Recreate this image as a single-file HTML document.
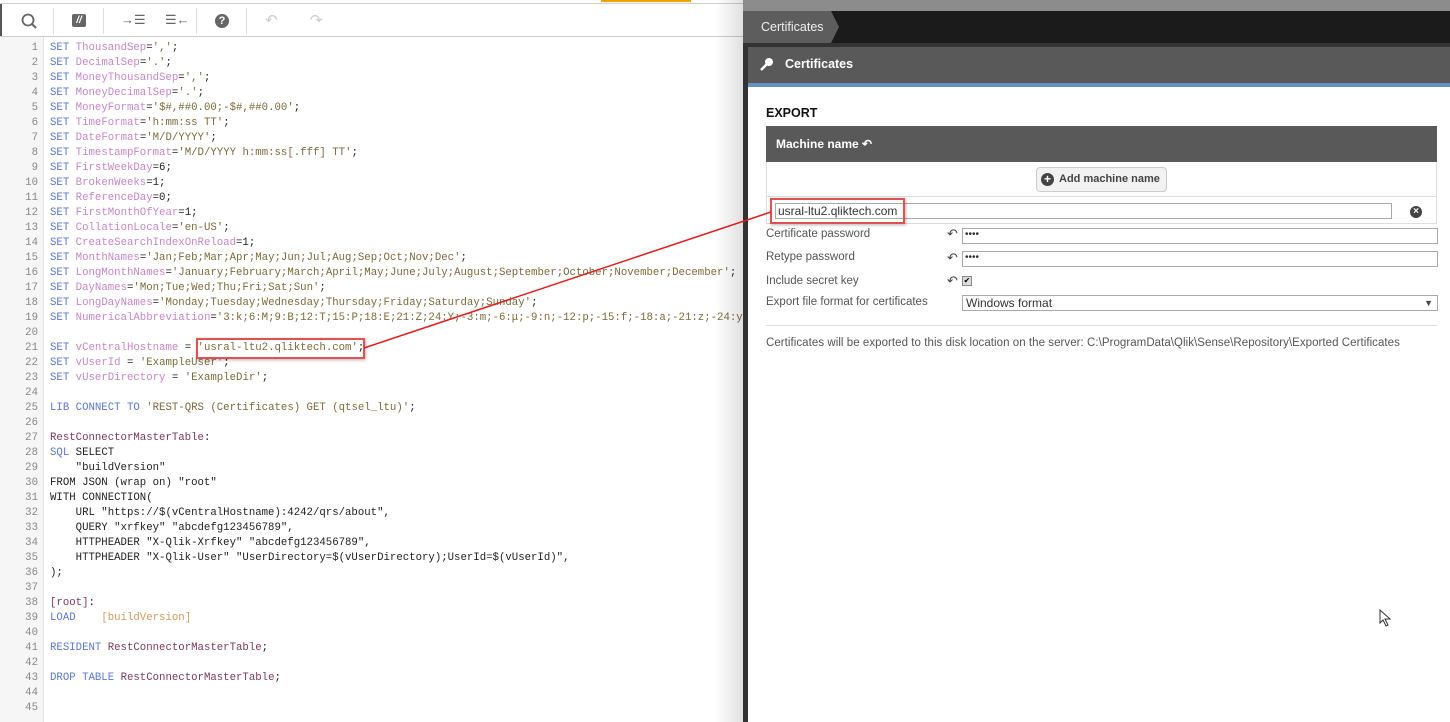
<!DOCTYPE html>
<html><head><meta charset="utf-8"><style>
*{margin:0;padding:0;box-sizing:border-box}
body{width:1450px;height:722px;overflow:hidden;background:#fff;position:relative;font-family:"Liberation Sans",sans-serif}
.abs{position:absolute}
#ed{left:0;top:0;width:743px;height:722px;background:#fff}
#gut{left:0;top:37px;width:44px;height:685px;background:#f6f6f6;border-right:1px solid #e2e2e2}
.code{font-family:"Liberation Mono",monospace;font-size:10.7px;line-height:15px;white-space:pre;color:#222}
#nums{left:0;top:41px;width:38px;text-align:right;color:#888}
#src{left:50px;top:41px}
.k{color:#5a78d6}.v{color:#c985c9}.s{color:#7c6a3a}.t{color:#7b3a5c}.f{color:#d49a5a}
.tb{top:8px;height:26px;width:1px;background:#ddd}
.lbl{font-size:11.5px;color:#555}
.inp{border:1px solid #aaa;background:#fff}
</style></head><body>
<div id="ed" class="abs">
 <div class="abs" style="left:0;top:3px;width:743px;height:1px;background:#d0d0d0"></div>
 <div class="abs" style="left:601px;top:0;width:90px;height:2px;background:#f0a000"></div>
 <div class="abs" style="left:0;top:36px;width:743px;height:1px;background:#ccc"></div>
 <div class="abs" style="left:0;top:4px;width:2px;height:32px;background:#555"></div>
 <svg class="abs" style="left:20px;top:12px" width="18" height="18"><circle cx="8" cy="8" r="5.5" fill="none" stroke="#666" stroke-width="1.8"/><line x1="12" y1="12" x2="16" y2="16" stroke="#666" stroke-width="2"/></svg>
 <div class="abs tb" style="left:53px"></div>
 <div class="abs" style="left:72px;top:14px;width:14px;height:13px;background:#666;border-radius:2px;color:#fff;font-size:10px;font-weight:bold;font-style:italic;text-align:center;line-height:13px">//</div>
 <div class="abs tb" style="left:103px"></div>
 <div class="abs" style="left:121px;top:12px;font-size:13px;color:#666">→☰</div>
 <div class="abs" style="left:165px;top:12px;font-size:13px;color:#666">☰←</div>
 <div class="abs tb" style="left:196px"></div>
 <div class="abs" style="left:215px;top:14px;width:14px;height:14px;border-radius:50%;background:#666;color:#fff;font-size:11px;font-weight:bold;text-align:center;line-height:14px">?</div>
 <div class="abs tb" style="left:246px"></div>
 <div class="abs" style="left:265px;top:11px;font-size:15px;color:#ccc">↶</div>
 <div class="abs" style="left:310px;top:11px;font-size:15px;color:#ccc">↷</div>
 <div id="gut" class="abs"></div>
 <div id="nums" class="abs code">1
2
3
4
5
6
7
8
9
10
11
12
13
14
15
16
17
18
19
20
21
22
23
24
25
26
27
28
29
30
31
32
33
34
35
36
37
38
39
40
41
42
43
44
45</div>
 <div id="src" class="abs code"><span class="k">SET</span> <span class="v">ThousandSep</span>=<span class="s">','</span>;
<span class="k">SET</span> <span class="v">DecimalSep</span>=<span class="s">'.'</span>;
<span class="k">SET</span> <span class="v">MoneyThousandSep</span>=<span class="s">','</span>;
<span class="k">SET</span> <span class="v">MoneyDecimalSep</span>=<span class="s">'.'</span>;
<span class="k">SET</span> <span class="v">MoneyFormat</span>=<span class="s">'$#,##0.00;-$#,##0.00'</span>;
<span class="k">SET</span> <span class="v">TimeFormat</span>=<span class="s">'h:mm:ss TT'</span>;
<span class="k">SET</span> <span class="v">DateFormat</span>=<span class="s">'M/D/YYYY'</span>;
<span class="k">SET</span> <span class="v">TimestampFormat</span>=<span class="s">'M/D/YYYY h:mm:ss[.fff] TT'</span>;
<span class="k">SET</span> <span class="v">FirstWeekDay</span>=6;
<span class="k">SET</span> <span class="v">BrokenWeeks</span>=1;
<span class="k">SET</span> <span class="v">ReferenceDay</span>=0;
<span class="k">SET</span> <span class="v">FirstMonthOfYear</span>=1;
<span class="k">SET</span> <span class="v">CollationLocale</span>=<span class="s">'en-US'</span>;
<span class="k">SET</span> <span class="v">CreateSearchIndexOnReload</span>=1;
<span class="k">SET</span> <span class="v">MonthNames</span>=<span class="s">'Jan;Feb;Mar;Apr;May;Jun;Jul;Aug;Sep;Oct;Nov;Dec'</span>;
<span class="k">SET</span> <span class="v">LongMonthNames</span>=<span class="s">'January;February;March;April;May;June;July;August;September;October;November;December'</span>;
<span class="k">SET</span> <span class="v">DayNames</span>=<span class="s">'Mon;Tue;Wed;Thu;Fri;Sat;Sun'</span>;
<span class="k">SET</span> <span class="v">LongDayNames</span>=<span class="s">'Monday;Tuesday;Wednesday;Thursday;Friday;Saturday;Sunday'</span>;
<span class="k">SET</span> <span class="v">NumericalAbbreviation</span>=<span class="s">'3:k;6:M;9:B;12:T;15:P;18:E;21:Z;24:Y;-3:m;-6:μ;-9:n;-12:p;-15:f;-18:a;-21:z;-24:y'</span>;

<span class="k">SET</span> <span class="v">vCentralHostname</span> = <span class="s">'usral-ltu2.qliktech.com'</span>;
<span class="k">SET</span> <span class="v">vUserId</span> = <span class="s">'ExampleUser'</span>;
<span class="k">SET</span> <span class="v">vUserDirectory</span> = <span class="s">'ExampleDir'</span>;

<span class="k">LIB CONNECT TO</span> <span class="s">'REST-QRS (Certificates) GET (qtsel_ltu)'</span>;

<span class="t">RestConnectorMasterTable</span>:
<span class="k">SQL</span> SELECT
    "buildVersion"
FROM JSON (wrap on) "root"
WITH CONNECTION(
    URL "https://$(vCentralHostname):4242/qrs/about",
    QUERY "xrfkey" "abcdefg123456789",
    HTTPHEADER "X-Qlik-Xrfkey" "abcdefg123456789",
    HTTPHEADER "X-Qlik-User" "UserDirectory=$(vUserDirectory);UserId=$(vUserId)",
);

<span class="t">[root]</span>:
<span class="k">LOAD</span>    <span class="f">[buildVersion]</span>

<span class="k">RESIDENT</span> <span class="t">RestConnectorMasterTable</span>;

<span class="k">DROP TABLE</span> <span class="t">RestConnectorMasterTable</span>;</div>
 <div class="abs" style="left:196px;top:338px;width:169px;height:21px;border:2px solid #e35050;box-shadow:1px 1px 3px rgba(0,0,0,.3)"></div>
 <div class="abs" style="left:715px;top:0;width:28px;height:722px;background:linear-gradient(to right,rgba(0,0,0,0),rgba(0,0,0,.12))"></div>
</div>
<div class="abs" style="left:743px;top:0;width:707px;height:722px;background:#333"></div>
<div class="abs" style="left:743px;top:0;width:707px;height:11px;background:#8c8c8c"></div>
<div class="abs" style="left:743px;top:11px;width:707px;height:32px;background:#1b1b1b"></div>
<svg class="abs" style="left:743px;top:11px" width="100" height="32"><polygon points="0,0 88,0 96,16 88,32 0,32" fill="#5d5d5d"/></svg>
<div class="abs" style="left:761px;top:20px;font-size:12.5px;color:#eee">Certificates</div>
<div class="abs" style="left:748px;top:47px;width:702px;height:36px;background:#595959"></div>
<div class="abs" style="left:748px;top:83px;width:702px;height:4px;background:#6592c4"></div>
<div class="abs" style="left:748px;top:87px;width:702px;height:635px;background:#fff"></div>
<svg class="abs" style="left:760px;top:57px" width="14" height="14"><circle cx="9" cy="5" r="4" fill="#fff"/><line x1="7" y1="7" x2="1" y2="13" stroke="#fff" stroke-width="2.5"/></svg>
<div class="abs" style="left:785px;top:57px;font-size:12.5px;font-weight:bold;color:#fff">Certificates</div>
<div class="abs" style="left:766px;top:106px;font-size:12.5px;font-weight:bold;color:#111">EXPORT</div>
<div class="abs" style="left:766px;top:126px;width:671px;height:36px;background:#595959"></div>
<div class="abs" style="left:776px;top:137px;font-size:12px;font-weight:bold;color:#fff">Machine name ↶</div>
<div class="abs" style="left:766px;top:162px;width:671px;height:62px;border:1px solid #ddd;border-top:none"></div>
<div class="abs" style="left:766px;top:196px;width:671px;height:1px;background:#ddd"></div>
<div class="abs" style="left:1036px;top:167px;width:131px;height:25px;border:1px solid #ccc;border-radius:4px;background:#f2f2f2"></div>
<div class="abs" style="left:1041px;top:173px;width:13px;height:13px;border-radius:50%;background:#444;color:#fff;font-size:12px;font-weight:bold;line-height:13px;text-align:center">+</div>
<div class="abs" style="left:1059px;top:173px;font-size:11px;font-weight:bold;color:#444">Add machine name</div>
<div class="abs inp" style="left:775px;top:203px;width:617px;height:16px"></div>
<div class="abs" style="left:778px;top:204px;font-size:12px;color:#333">usral-ltu2.qliktech.com</div>
<div class="abs" style="left:770px;top:198px;width:135px;height:26px;border:2px solid #e35050;box-shadow:1px 1px 3px rgba(0,0,0,.3)"></div>
<div class="abs" style="left:1410px;top:206px;width:12px;height:12px;border-radius:50%;background:#444;color:#fff;font-size:10px;line-height:12px;text-align:center;font-weight:bold">×</div>
<div class="abs lbl" style="left:766px;top:228px">Certificate password</div>
<div class="abs lbl" style="left:766px;top:251px">Retype password</div>
<div class="abs lbl" style="left:766px;top:275px">Include secret key</div>
<div class="abs lbl" style="left:766px;top:296px">Export file format for certificates</div>
<div class="abs" style="left:947px;top:226px;font-size:13px;color:#444">↶</div>
<div class="abs" style="left:947px;top:250px;font-size:13px;color:#444">↶</div>
<div class="abs" style="left:947px;top:273px;font-size:13px;color:#444">↶</div>
<div class="abs inp" style="left:962px;top:228px;width:476px;height:16px;font-size:10px;line-height:12px;padding-left:2px;color:#333">••••</div>
<div class="abs inp" style="left:962px;top:251px;width:476px;height:16px;font-size:10px;line-height:12px;padding-left:2px;color:#333">••••</div>
<div class="abs" style="left:962px;top:276px;width:10px;height:10px;border:1px solid #888;background:#ddd;font-size:8px;line-height:8px;text-align:center">✔</div>
<div class="abs inp" style="left:962px;top:295px;width:476px;height:16px;font-size:12px;line-height:14px;padding-left:3px;color:#333">Windows format<span style="position:absolute;right:4px;top:0;font-size:9px;color:#444">▼</span></div>
<div class="abs" style="left:766px;top:325px;width:671px;height:1px;background:#ddd"></div>
<div class="abs lbl" style="left:766px;top:337px;font-size:11.5px;letter-spacing:0.05px">Certificates will be exported to this disk location on the server: C:\ProgramData\Qlik\Sense\Repository\Exported Certificates</div>
<svg class="abs" style="left:1379px;top:609px" width="14" height="20"><path d="M1,1 L1,14 L4,11 L7,17 L9,16 L6,10 L11,10 Z" fill="#fff" stroke="#333" stroke-width="1"/></svg>
<svg class="abs" style="left:0;top:0" width="1450" height="722"><line x1="364" y1="348" x2="771" y2="212" stroke="#e81818" stroke-width="1.5"/></svg>
</body></html>
